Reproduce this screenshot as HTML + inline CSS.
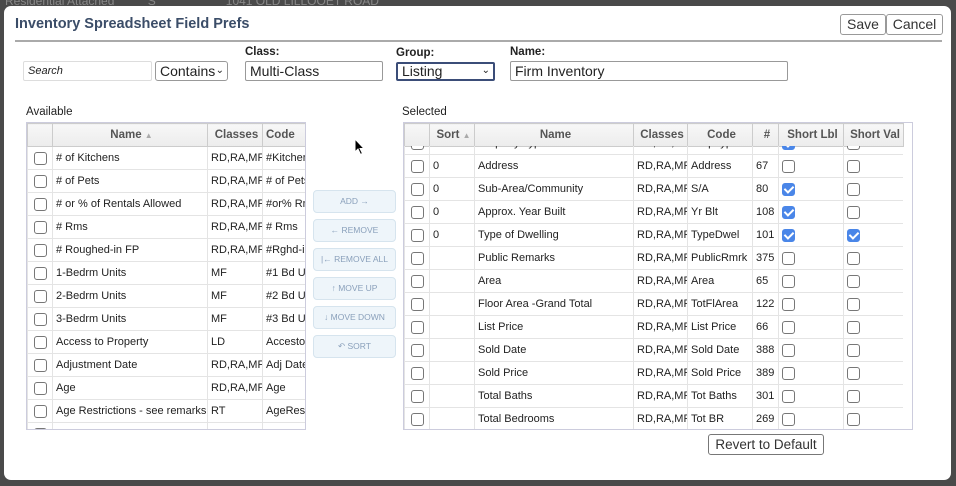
<!DOCTYPE html>
<html><head><meta charset="utf-8"><style>
*{box-sizing:border-box;margin:0;padding:0}
body{width:956px;height:486px;background:#4a4a4a;font-family:"Liberation Sans",sans-serif;position:relative;overflow:hidden;color:#222}
.bgtxt{position:absolute;top:-6px;font-size:12px;color:#888}
.dlg{position:absolute;left:4px;top:6px;width:947px;height:474px;background:#fff;border-radius:7px}
.a{position:absolute}
.title{left:11px;top:10px;font-size:14.5px;font-weight:bold;color:#3b4d68}
.hr{left:11px;top:34px;width:927px;height:2px;background:#aaa}
.btn{position:absolute;border:1px solid #999;border-radius:3px;background:#fff;font-size:14px;color:#333;text-align:center;line-height:19px}
.inp{position:absolute;border:1px solid #999;border-radius:2px;background:#fff;font-size:14px;padding-left:4px;line-height:18px;color:#222}
.lbl{position:absolute;font-size:11.5px;font-weight:bold}
.tbl{position:absolute;border:1px solid #ccd;overflow:hidden;background:#fff}
table{border-collapse:collapse;table-layout:fixed;font-size:11px}
td,th{height:23px;border:1px solid #e4e4e4;white-space:nowrap;overflow:hidden;padding-left:3px;text-align:left}
th{background:linear-gradient(#f7f7f7,#ececec);color:#555;font-weight:bold;text-align:center;border-color:#ccc;height:23px;font-size:11.5px}
.cb{display:inline-block;width:13px;height:13px;border:1px solid #777;border-radius:3px;vertical-align:middle;background:#fff}
.ck{background:#4a86e8;border-color:#4a86e8;position:relative}
.ck:after{content:"";position:absolute;left:3px;top:0px;width:4px;height:7px;border:solid #fff;border-width:0 2px 2px 0;transform:rotate(45deg)}
td.c{padding-left:6px}
.mb{position:absolute;left:309px;width:83px;height:23px;border:1px solid #d6e4ee;border-radius:4px;background:#eef5fa;color:#8aa0bb;font-size:8.5px;text-align:center;line-height:21px}
</style></head><body>
<div class="bgtxt" style="left:5px">Residential Attached &nbsp;&nbsp;&nbsp;&nbsp;&nbsp;&nbsp;&nbsp;&nbsp; S &nbsp;&nbsp;&nbsp;&nbsp;&nbsp;&nbsp;&nbsp;&nbsp;&nbsp;&nbsp;&nbsp;&nbsp;&nbsp;&nbsp;&nbsp;&nbsp;&nbsp;&nbsp;&nbsp; 1041 OLD LILLOOET ROAD</div>
<div class="dlg">
<div class="a title">Inventory Spreadsheet Field Prefs</div>
<div class="btn" style="left:836px;top:8px;width:46px;height:21px">Save</div>
<div class="btn" style="left:882px;top:8px;width:57px;height:21px">Cancel</div>
<div class="a hr"></div>

<div class="inp" style="left:19px;top:55px;width:129px;height:20px;font-size:11px;font-style:italic;border-color:#ddd">Search</div>
<div class="inp" style="left:151px;top:55px;width:73px;height:20px;border-radius:3px">Contains<span style="position:absolute;right:3px;top:0;font-size:10px">&#8964;</span></div>
<div class="lbl" style="left:241px;top:40px">Class:</div>
<div class="inp" style="left:241px;top:55px;width:138px;height:20px">Multi-Class</div>
<div class="lbl" style="left:392px;top:41px">Group:</div>
<div class="inp" style="left:392px;top:56px;width:99px;height:19px;border:2px solid #3b4d78;line-height:15px">Listing<span style="position:absolute;right:3px;top:-1px;font-size:10px">&#8964;</span></div>
<div class="lbl" style="left:506px;top:40px">Name:</div>
<div class="inp" style="left:506px;top:55px;width:278px;height:20px">Firm Inventory</div>

<div class="a" style="left:22px;top:100px;font-size:11.5px">Available</div>
<div class="tbl" style="left:22px;top:116px;width:280px;height:308px">
<table style="width:310px">
<col style="width:25px"><col style="width:155px"><col style="width:55px"><col style="width:75px">
<tr><th></th><th>Name <span style="font-size:8px;color:#aaa">&#9650;</span></th><th>Classes</th><th style="text-align:left">Code</th></tr>
<tr><td class="c"><span class="cb"></span></td><td># of Kitchens</td><td>RD,RA,MF</td><td>#Kitchens</td></tr>
<tr><td class="c"><span class="cb"></span></td><td># of Pets</td><td>RD,RA,MF,I</td><td># of Pets</td></tr>
<tr><td class="c"><span class="cb"></span></td><td># or % of Rentals Allowed</td><td>RD,RA,MF</td><td>#or% Rnt</td></tr>
<tr><td class="c"><span class="cb"></span></td><td># Rms</td><td>RD,RA,MF</td><td># Rms</td></tr>
<tr><td class="c"><span class="cb"></span></td><td># Roughed-in FP</td><td>RD,RA,MF</td><td>#Rghd-in</td></tr>
<tr><td class="c"><span class="cb"></span></td><td>1-Bedrm Units</td><td>MF</td><td>#1 Bd Units</td></tr>
<tr><td class="c"><span class="cb"></span></td><td>2-Bedrm Units</td><td>MF</td><td>#2 Bd Units</td></tr>
<tr><td class="c"><span class="cb"></span></td><td>3-Bedrm Units</td><td>MF</td><td>#3 Bd Units</td></tr>
<tr><td class="c"><span class="cb"></span></td><td>Access to Property</td><td>LD</td><td>AccestoProp</td></tr>
<tr><td class="c"><span class="cb"></span></td><td>Adjustment Date</td><td>RD,RA,MF,I</td><td>Adj Date</td></tr>
<tr><td class="c"><span class="cb"></span></td><td>Age</td><td>RD,RA,MF</td><td>Age</td></tr>
<tr><td class="c"><span class="cb"></span></td><td>Age Restrictions - see remarks</td><td>RT</td><td>AgeRestr</td></tr>
<tr><td class="c"><span class="cb"></span></td><td>Age Type</td><td>RD,RA,MF</td><td>Age Type</td></tr>
</table></div>

<div class="mb" style="top:184px">ADD &#8594;</div>
<div class="mb" style="top:213px">&#8592; REMOVE</div>
<div class="mb" style="top:242px">|&#8592; REMOVE ALL</div>
<div class="mb" style="top:271px">&#8593; MOVE UP</div>
<div class="mb" style="top:300px">&#8595; MOVE DOWN</div>
<div class="mb" style="top:329px">&#8630; SORT</div>
<svg class="a" style="left:350px;top:132px" width="12" height="18" viewBox="0 0 12 18"><path d="M1 1 L1 14 L4 11 L6.5 16.5 L8.5 15.5 L6 10.5 L10 10.5 Z" fill="#000" stroke="#fff" stroke-width="1"/></svg>

<div class="a" style="left:398px;top:100px;font-size:11.5px">Selected</div>
<div class="tbl" style="left:399px;top:116px;width:510px;height:308px">
<table style="width:499px">
<col style="width:25px"><col style="width:45px"><col style="width:159px"><col style="width:54px"><col style="width:65px"><col style="width:26px"><col style="width:65px"><col style="width:60px">
<tr><th></th><th>Sort <span style="font-size:8px;color:#aaa">&#9650;</span></th><th>Name</th><th>Classes</th><th>Code</th><th>#</th><th>Short Lbl</th><th>Short Val</th></tr>
</table>
<div style="position:absolute;top:23px;left:0;height:284px;overflow:hidden;width:499px">
<table style="width:499px;margin-top:-15px">
<col style="width:25px"><col style="width:45px"><col style="width:159px"><col style="width:54px"><col style="width:65px"><col style="width:26px"><col style="width:65px"><col style="width:60px">
<tr><td class="c"><span class="cb"></span></td><td></td><td>Property Type</td><td>RD,RA,MF,I</td><td>PropType</td><td>1</td><td><span class="cb ck"></span></td><td><span class="cb"></span></td></tr>
<tr><td class="c"><span class="cb"></span></td><td>0</td><td>Address</td><td>RD,RA,MF,I</td><td>Address</td><td>67</td><td><span class="cb"></span></td><td><span class="cb"></span></td></tr>
<tr><td class="c"><span class="cb"></span></td><td>0</td><td>Sub-Area/Community</td><td>RD,RA,MF,I</td><td>S/A</td><td>80</td><td><span class="cb ck"></span></td><td><span class="cb"></span></td></tr>
<tr><td class="c"><span class="cb"></span></td><td>0</td><td>Approx. Year Built</td><td>RD,RA,MF</td><td>Yr Blt</td><td>108</td><td><span class="cb ck"></span></td><td><span class="cb"></span></td></tr>
<tr><td class="c"><span class="cb"></span></td><td>0</td><td>Type of Dwelling</td><td>RD,RA,MF</td><td>TypeDwel</td><td>101</td><td><span class="cb ck"></span></td><td><span class="cb ck"></span></td></tr>
<tr><td class="c"><span class="cb"></span></td><td></td><td>Public Remarks</td><td>RD,RA,MF,I</td><td>PublicRmrk</td><td>375</td><td><span class="cb"></span></td><td><span class="cb"></span></td></tr>
<tr><td class="c"><span class="cb"></span></td><td></td><td>Area</td><td>RD,RA,MF,I</td><td>Area</td><td>65</td><td><span class="cb"></span></td><td><span class="cb"></span></td></tr>
<tr><td class="c"><span class="cb"></span></td><td></td><td>Floor Area -Grand Total</td><td>RD,RA,MF,I</td><td>TotFlArea</td><td>122</td><td><span class="cb"></span></td><td><span class="cb"></span></td></tr>
<tr><td class="c"><span class="cb"></span></td><td></td><td>List Price</td><td>RD,RA,MF,I</td><td>List Price</td><td>66</td><td><span class="cb"></span></td><td><span class="cb"></span></td></tr>
<tr><td class="c"><span class="cb"></span></td><td></td><td>Sold Date</td><td>RD,RA,MF,I</td><td>Sold Date</td><td>388</td><td><span class="cb"></span></td><td><span class="cb"></span></td></tr>
<tr><td class="c"><span class="cb"></span></td><td></td><td>Sold Price</td><td>RD,RA,MF,I</td><td>Sold Price</td><td>389</td><td><span class="cb"></span></td><td><span class="cb"></span></td></tr>
<tr><td class="c"><span class="cb"></span></td><td></td><td>Total Baths</td><td>RD,RA,MF,I</td><td>Tot Baths</td><td>301</td><td><span class="cb"></span></td><td><span class="cb"></span></td></tr>
<tr><td class="c"><span class="cb"></span></td><td></td><td>Total Bedrooms</td><td>RD,RA,MF,I</td><td>Tot BR</td><td>269</td><td><span class="cb"></span></td><td><span class="cb"></span></td></tr>
</table></div>
</div>
<div class="btn" style="left:704px;top:428px;width:116px;height:21px;font-size:13.5px;border-color:#777">Revert to Default</div>
</div>
</body></html>
